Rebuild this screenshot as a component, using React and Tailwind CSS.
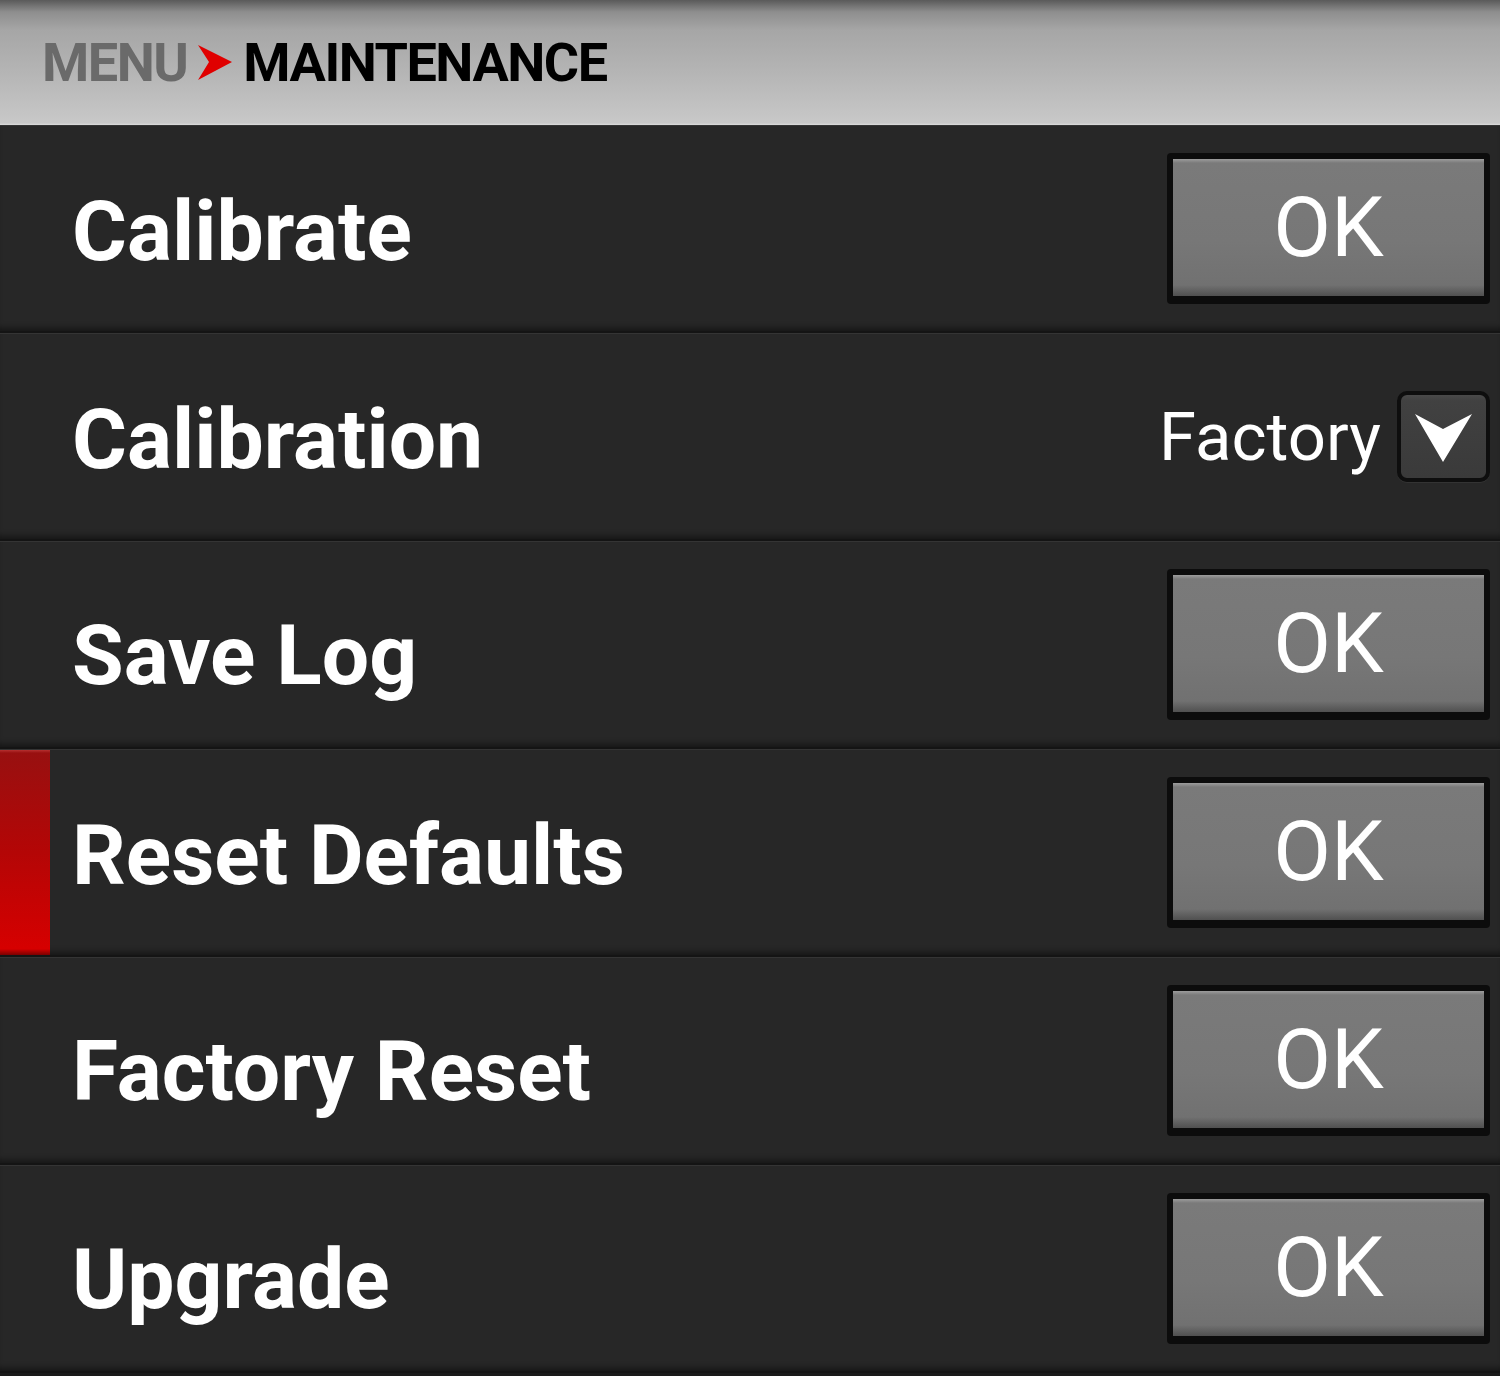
import React from "react";

const rows = [
  { label: "Calibrate", kind: "ok" },
  { label: "Calibration", kind: "select", value: "Factory" },
  { label: "Save Log", kind: "ok", low: true },
  { label: "Reset Defaults", kind: "ok", selected: true },
  { label: "Factory Reset", kind: "ok", low: true },
  { label: "Upgrade", kind: "ok", low: true },
];

const OkButton = () => (
  <button className="w-[323px] h-[151px] rounded-[4px] bg-[#0c0c0c] p-[6px] pb-[8px] shrink-0">
    <div className="w-full h-full flex items-center justify-center bg-[linear-gradient(to_bottom,#9c9c9c_0px,#7a7a7a_4px,#777777_60%,#717171_92%,#505050_100%)] text-white text-[84px] leading-none font-normal">
      OK
    </div>
  </button>
);

const SelectValue = ({ value }) => (
  <div className="flex items-center">
    <span className="text-white text-[67px] leading-none mr-[16px] mt-[2px]">{value}</span>
    <div className="w-[93px] h-[91px] rounded-[10px] border-[4px] border-[#0e0e0e] bg-[linear-gradient(to_bottom,#4a4a4a_0px,#414141_6px,#3a3a3a_100%)] shadow-[0_1px_0_#333]">
      <svg width="85" height="83" viewBox="4 4 85 83" className="block">
        <polygon points="18,23 46,38 75,23 46,71" fill="white" />
      </svg>
    </div>
  </div>
);

const Row = ({ row }) => (
  <div className="flex items-stretch h-[208px] bg-[#272727] border-t border-[#343434] border-b-[2px] border-b-[#141414] shadow-[inset_0_-7px_6px_-4px_rgba(0,0,0,0.45)]">
    <div
      className={
        row.selected
          ? "w-[50px] shrink-0 bg-[linear-gradient(to_bottom,#b53030_0px,#981010_3px,#b40606_50%,#d60000_97%,#7a0000_100%)]"
          : "w-[50px] shrink-0"
      }
    />
    <div className="flex-1 flex items-center justify-between pl-[22px] pr-[10px]">
      <span
        className={
          row.low
            ? "text-white font-bold text-[84px] leading-none mt-[22px]"
            : "text-white font-bold text-[84px] leading-none mt-[6px]"
        }
      >
        {row.label}
      </span>
      {row.kind === "ok" ? <OkButton /> : <SelectValue value={row.value} />}
    </div>
  </div>
);

export default function App() {
  return (
    <div className="w-[1500px] h-[1376px] bg-[#1a1a1a] overflow-hidden font-['Roboto',sans-serif]">
      <div className="h-[125px] flex items-center pl-[42px] bg-[linear-gradient(to_bottom,#5a5a5a_0px,#8e8e8e_12px,#a6a6a6_30px,#b4b4b4_70px,#c8c8c8_123px,#dcdcdc_125px)]">
        <span className="text-[#6a6a6a] font-bold text-[54px] leading-none tracking-[-1.5px]">MENU</span>
        <svg width="36" height="38" viewBox="0 0 36 38" className="mx-[10px]">
          <polygon points="1,1 35,18 1,36 12,18" fill="#e00000" />
        </svg>
        <span className="text-black font-bold text-[54px] leading-none tracking-[-1.5px]">MAINTENANCE</span>
      </div>
      {rows.map((row) => (
        <Row key={row.label} row={row} />
      ))}
    </div>
  );
}
